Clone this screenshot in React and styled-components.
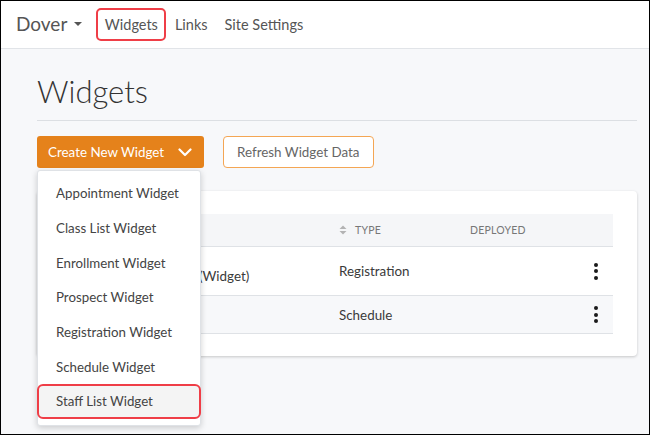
import React from "react";
import styled, { createGlobalStyle } from "styled-components";

const orange = "#e5821b";
const highlight = "#ef3e47";
const textDark = "#3a3a3a";

const GlobalStyle = createGlobalStyle`
  html, body {
    margin: 0;
    padding: 0;
    background: #ffffff;
  }
  * {
    box-sizing: border-box;
  }
  body {
    font-family: Lato, "Open Sans", Arial, sans-serif;
  }
`;

const menuItems = [
  "Appointment Widget",
  "Class List Widget",
  "Enrollment Widget",
  "Prospect Widget",
  "Registration Widget",
  "Schedule Widget",
  "Staff List Widget",
];

const rows = [
  { name: "Day Camp Registration (Widget)", type: "Registration", tall: true },
  { name: "Dover Schedule", type: "Schedule", shaded: true },
];

export default function App() {
  return (
    <>
      <GlobalStyle />
      <Frame>
        <NavBar>
          <Brand>
            Dover <Caret />
          </Brand>
          <NavLink $marked>Widgets</NavLink>
          <NavLink>Links</NavLink>
          <NavLink>Site Settings</NavLink>
        </NavBar>

        <Main>
          <Title>Widgets</Title>
          <Divider />

          <Actions>
            <DropWrap>
              <PrimaryBtn>
                Create New Widget
                <svg width="14" height="9" viewBox="0 0 14 9">
                  <path
                    d="M1.5 1.5 L7 7 L12.5 1.5"
                    fill="none"
                    stroke="#fff"
                    strokeWidth="2.2"
                    strokeLinecap="round"
                    strokeLinejoin="round"
                  />
                </svg>
              </PrimaryBtn>
              <Menu>
                {menuItems.map((item) => (
                  <MenuItem key={item} $active={item === "Staff List Widget"}>
                    {item}
                  </MenuItem>
                ))}
              </Menu>
            </DropWrap>
            <OutlineBtn>Refresh Widget Data</OutlineBtn>
          </Actions>

          <Card>
            <HeadRow>
              <HeadCell>
                <SortIcon /> Name
              </HeadCell>
              <HeadCell>
                <SortIcon /> Type
              </HeadCell>
              <HeadCell>Deployed</HeadCell>
              <HeadCell />
            </HeadRow>
            {rows.map((r) => (
              <BodyRow key={r.type} $tall={r.tall} $shaded={r.shaded}>
                <NameCell $tall={r.tall}>{r.name}</NameCell>
                <Cell>{r.type}</Cell>
                <Cell />
                <Cell>
                  <Kebab>
                    <i />
                    <i />
                    <i />
                  </Kebab>
                </Cell>
              </BodyRow>
            ))}
          </Card>
        </Main>
      </Frame>
    </>
  );
}

function Caret() {
  return (
    <svg width="8" height="4" viewBox="0 0 8 4">
      <path d="M0 0 L8 0 L4 4 Z" fill="#555" />
    </svg>
  );
}

function SortIcon() {
  return (
    <svg width="8" height="10" viewBox="0 0 8 10">
      <path d="M0.5 4 L4 0.5 L7.5 4 Z" fill="#b3b3b3" />
      <path d="M0.5 6 L4 9.5 L7.5 6 Z" fill="#b3b3b3" />
    </svg>
  );
}

const Frame = styled.div`
  width: 650px;
  height: 435px;
  border: 1px solid #000;
  background: #f7f8fa;
  overflow: hidden;
  display: flex;
  flex-direction: column;
`;

const NavBar = styled.nav`
  height: 48px;
  flex: none;
  background: #fff;
  border-bottom: 1px solid #e1e4e8;
  display: flex;
  align-items: center;
  padding-left: 15px;
`;

const Brand = styled.div`
  font-size: 19px;
  color: #555;
  display: flex;
  align-items: center;
  gap: 7px;
  margin-right: 14px;
  padding-bottom: 2px;
`;

const NavLink = styled.a`
  font-size: 14.5px;
  color: #555;
  padding: 6px 6.5px;
  border-radius: 5px;
  border: 2.5px solid ${(p) => (p.$marked ? highlight : "transparent")};
`;

const Main = styled.main`
  flex: 1;
  padding: 23px 12px 0 36px;
  display: flex;
  flex-direction: column;
`;

const Title = styled.h1`
  margin: 0;
  font-size: 31px;
  font-weight: 300;
  color: #333;
  line-height: 38px;
`;

const Divider = styled.hr`
  margin: 10px 0 15px;
  border: none;
  border-top: 1px solid #dcdfe3;
`;

const Actions = styled.div`
  display: flex;
  gap: 19px;
  align-items: flex-start;
  position: relative;
  z-index: 2;
`;

const DropWrap = styled.div`
  position: relative;
`;

const btnText = `
  font-family: Lato, Arial, sans-serif;
  font-size: 13.4px;
`;

const PrimaryBtn = styled.button`
  ${btnText};
  height: 32px;
  width: 167px;
  padding: 0 12px 0 11px;
  border: none;
  border-radius: 3px;
  background: ${orange};
  color: #fff;
  display: flex;
  align-items: center;
  justify-content: space-between;
`;

const OutlineBtn = styled.button`
  ${btnText};
  height: 32px;
  padding: 0 13px;
  border: 1px solid #f4a654;
  border-radius: 4px;
  background: #fff;
  color: #666;
`;

const Menu = styled.ul`
  position: absolute;
  top: 34px;
  left: 0;
  width: 164px;
  margin: 0;
  padding: 5px 0 6px;
  list-style: none;
  background: #fff;
  border: 1px solid #dfe2e6;
  border-radius: 3px;
  box-shadow: 0 2px 6px rgba(0, 0, 0, 0.18);
`;

const MenuItem = styled.li`
  height: 34.7px;
  display: flex;
  align-items: center;
  padding-left: 17px;
  font-size: 13.3px;
  color: #444;
  border-radius: 6px;
  background: ${(p) => (p.$active ? "#f4f4f4" : "transparent")};
  border: 2.5px solid ${(p) => (p.$active ? highlight : "transparent")};
  margin: 0 -1px;
`;

const Card = styled.section`
  margin-top: 23px;
  background: #fff;
  border-radius: 4px;
  box-shadow: 0 1px 3px rgba(0, 0, 0, 0.2);
  padding: 23px 24px 22px;
`;

const gridCols = `
  display: grid;
  grid-template-columns: 278px 131px 1fr 40px;
`;

const HeadRow = styled.div`
  ${gridCols};
  height: 33px;
  background: #f5f6f8;
  border-bottom: 1px solid #dfe2e6;
  align-items: center;
  padding-left: 12px;
  grid-template-columns: 266px 131px 1fr 40px;
`;

const HeadCell = styled.div`
  font-size: 10.5px;
  text-transform: uppercase;
  color: #777;
  display: flex;
  align-items: center;
  gap: 8px;
  letter-spacing: 0.2px;
`;

const BodyRow = styled.div`
  ${gridCols};
  height: ${(p) => (p.$tall ? "49px" : "38px")};
  background: ${(p) => (p.$shaded ? "#f7f8fa" : "#fff")};
  border-bottom: 1px solid #dfe2e6;
  align-items: center;
`;

const Cell = styled.div`
  font-size: 13.4px;
  color: ${textDark};
  display: flex;
  align-items: center;
`;

const NameCell = styled(Cell)`
  white-space: nowrap;
  padding-top: ${(p) => (p.$tall ? "10px" : "0")};
`;

const Kebab = styled.span`
  display: flex;
  flex-direction: column;
  gap: 2.5px;
  margin-left: 21px;

  i {
    width: 4px;
    height: 4px;
    border-radius: 50%;
    background: #1a1a1a;
  }
`;
